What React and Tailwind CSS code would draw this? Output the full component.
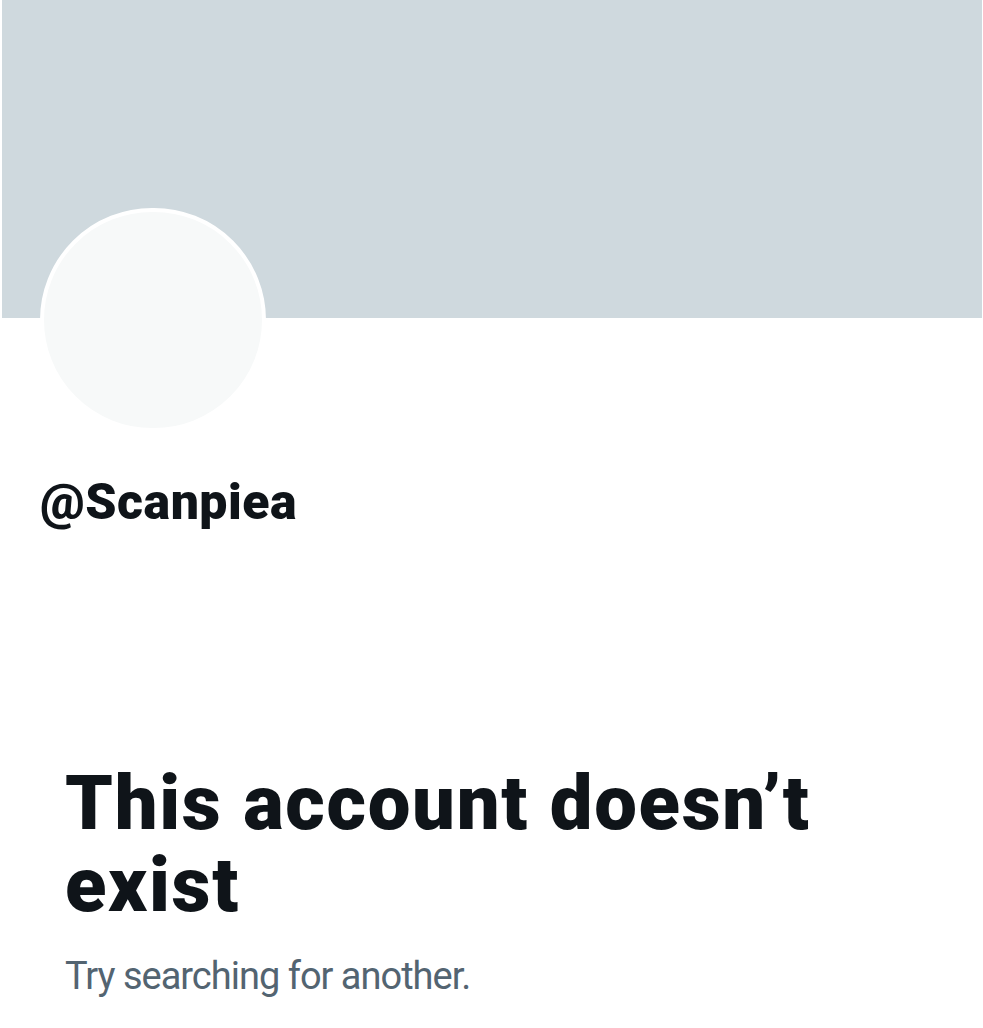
export default function App() {
  return (
    <div className="w-[983px] h-[1028px] bg-white overflow-hidden" style={{ fontFamily: "Roboto, 'Liberation Sans', sans-serif" }}>
      <div className="ml-[2px] mr-[1px] h-[318px] bg-[#cfd9de]" />
      <div className="ml-[40px] -mt-[110px] w-[226px] h-[224px] rounded-full bg-[#f7f9f9] border-[4px] border-white" />
      <div className="ml-[40px] mt-[40px] text-[50px] leading-[60px] tracking-[0.5px] font-black text-[#0f1419]">@Scanpiea</div>
      <div className="ml-[65px] mt-[230px]">
        <h1 className="text-[76px] leading-[82px] tracking-[1.7px] font-black text-[#0f1419]">This account doesn’t<br />exist</h1>
        <p className="mt-[26px] text-[38px] leading-[48px] tracking-[-1px] text-[#536471]">Try searching for another.</p>
      </div>
    </div>
  );
}
